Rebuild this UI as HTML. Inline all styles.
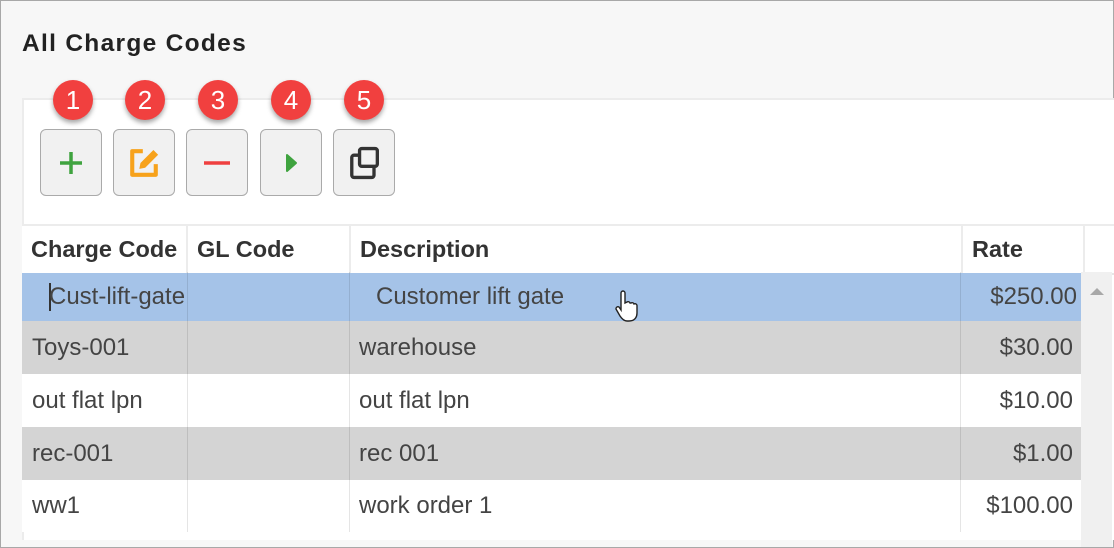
<!DOCTYPE html>
<html><head><style>
body{margin:0;width:1114px;height:548px;overflow:hidden;background:#fff;font-family:"Liberation Sans",sans-serif;position:relative}
.frame{position:absolute;left:0;top:0;width:1112px;height:546px;border:1px solid #a8a8a8;background:#f7f7f7}
h1{position:absolute;left:22px;top:30px;margin:0;font-size:24.5px;font-weight:bold;color:#222;letter-spacing:1.3px}
.panel{position:absolute;left:22px;top:98px;width:1092px;height:440px;background:#fff;border-top:2px solid #ececec;border-left:2px solid #ececec}
.btn{position:absolute;top:129px;width:60px;height:65px;border:1.5px solid #aaa;border-radius:6px;background:#f1f1f1;display:flex;align-items:center;justify-content:center}
.badge{position:absolute;top:80px;width:40px;height:40px;border-radius:50%;background:#f1403f;color:#fff;font-size:26px;text-align:center;line-height:40px;box-shadow:0 3px 5px rgba(0,0,0,.35)}
.hdr{position:absolute;top:224px;left:22px;width:1092px;height:47px;border-top:2px solid #ececec;border-bottom:2px solid #e6e6e6;background:#fff}
.hc{position:absolute;top:0;height:47px;line-height:47px;font-weight:bold;font-size:23.5px;color:#333;border-left:2px solid #ececec;padding-left:9px;box-sizing:border-box;white-space:nowrap;overflow:hidden}
.row{position:absolute;left:22px;width:1059px;font-size:24px;color:#444}
.row div{position:absolute;top:0;height:100%;display:flex;align-items:center;white-space:nowrap}
.sb{position:absolute;left:1081px;top:272px;width:31px;height:275px;background:#f0f0f0}
.vl{position:absolute;top:272px;height:260px;width:1px;background:rgba(0,0,0,.1)}
</style></head><body>
<div class="frame"></div>
<h1>All Charge Codes</h1>
<div class="panel"></div>
<div class="btn" style="left:40px"><svg width="30" height="30" viewBox="0 0 30 30"><path d="M15 4v22M4 15h22" stroke="#3fa33f" stroke-width="3.5"/></svg></div>
<div class="btn" style="left:113px"><svg width="40" height="40" viewBox="0 0 34 34"><path d="M16 7H7v20h20V18" fill="none" stroke="#f7a21b" stroke-width="3.5" stroke-linejoin="round"/><path d="M13 22l1-5 11-11 4 4-11 11z" fill="#f7a21b"/></svg></div>
<div class="btn" style="left:186px"><svg width="30" height="30" viewBox="0 0 30 30"><path d="M2 15h26" stroke="#ef4040" stroke-width="3.5"/></svg></div>
<div class="btn" style="left:260px"><svg width="30" height="30" viewBox="0 0 30 30"><path d="M11 7l9 8-9 8z" fill="#3fa33f" stroke="#3fa33f" stroke-linejoin="round" stroke-width="2"/></svg></div>
<div class="btn" style="left:333px"><svg width="40" height="40" viewBox="0 0 36 36"><rect x="14" y="5" width="16" height="16" rx="2" fill="none" stroke="#333" stroke-width="3"/><path d="M14 11h-5a2 2 0 0 0-2 2v16a2 2 0 0 0 2 2h16a2 2 0 0 0 2-2v-8" fill="none" stroke="#333" stroke-width="3"/></svg></div>
<div class="badge" style="left:53px">1</div>
<div class="badge" style="left:125px">2</div>
<div class="badge" style="left:198px">3</div>
<div class="badge" style="left:271px">4</div>
<div class="badge" style="left:344px">5</div>
<div class="hdr">
<div class="hc" style="left:0;width:165px;border-left:0">Charge Code</div>
<div class="hc" style="left:164px;width:163px">GL Code</div>
<div class="hc" style="left:327px;width:612px">Description</div>
<div class="hc" style="left:939px;width:122px">Rate</div>
<div class="hc" style="left:1061px;width:31px"></div>
</div>
<div class="row" style="top:273px;height:48px;background:#a5c3e8"><div style="left:27px;width:138px;overflow:hidden"><span style="border-left:2px solid #333;height:28px;display:inline-block;margin-right:-2px"></span>Cust-lift-gate</div><div style="left:354px">Customer lift gate</div><div style="right:4px">$250.00</div></div>
<div class="row" style="top:321px;height:53px;background:#d4d4d4"><div style="left:10px">Toys-001</div><div style="left:337px">warehouse</div><div style="right:8px">$30.00</div></div>
<div class="row" style="top:374px;height:53px;background:#fff"><div style="left:10px">out flat lpn</div><div style="left:337px">out flat lpn</div><div style="right:8px">$10.00</div></div>
<div class="row" style="top:427px;height:53px;background:#d4d4d4"><div style="left:10px">rec-001</div><div style="left:337px">rec 001</div><div style="right:8px">$1.00</div></div>
<div class="row" style="top:480px;height:52px;background:#fff"><div style="left:10px">ww1</div><div style="left:337px">work order 1</div><div style="right:8px">$100.00</div></div>
<div class="vl" style="left:187px"></div><div class="vl" style="left:349px"></div><div class="vl" style="left:960px"></div>
<div class="sb"><svg width="31" height="30" viewBox="0 0 31 30"><path d="M9 23l7-7 7 7z" fill="#a8a8a8"/></svg></div>
<svg style="position:absolute;left:614px;top:290px" width="26" height="34" viewBox="0 0 26 34"><path d="M7 3a2 2 0 0 1 4 0v10l2-1a2 2 0 0 1 3 1l1 0a2 2 0 0 1 3 1a2 2 0 0 1 3 2v7c0 5-3 8-8 8h-2c-3 0-5-2-7-5l-4-7a2 2 0 0 1 3-2l2 3z" fill="#fff" stroke="#222" stroke-width="1.4"/></svg>
</body></html>
